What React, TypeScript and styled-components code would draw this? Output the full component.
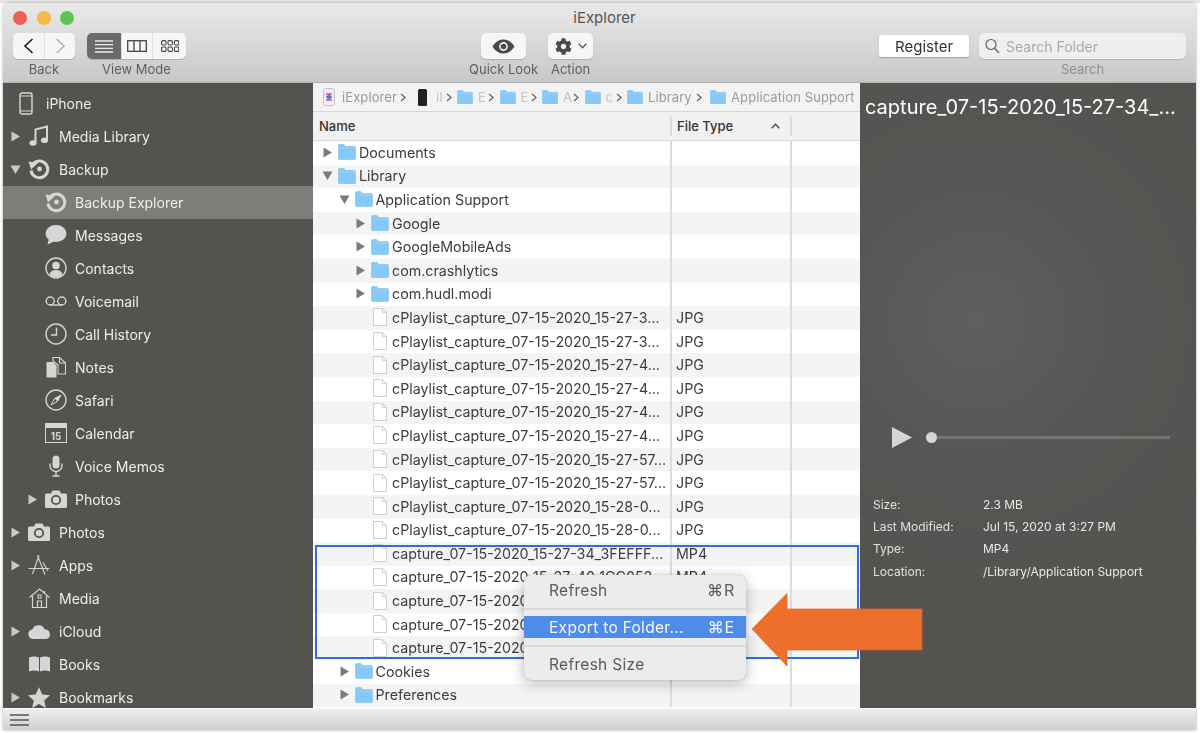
import React from 'react'
import styled, { createGlobalStyle } from 'styled-components'
import { FaCog } from 'react-icons/fa'

const GlobalStyle = createGlobalStyle`
    html, body {
        margin: 0;
        padding: 0;
        background: #fff;
        overflow: hidden;
    }
    * {
        box-sizing: border-box;
    }
    #root {
        font-family: Inter, "Liberation Sans", sans-serif;
    }
`

const SIDE_ICON_COLOR = '#d6d6d4'

const SideIcon = ({ name }: { name: string }) => {
    const c = SIDE_ICON_COLOR
    const line = { fill: 'none', stroke: c, strokeWidth: 1.4 }
    switch (name) {
        case 'phone':
            return (
                <svg width="14" height="23" viewBox="0 0 14 23">
                    <rect x="1" y="1" width="12" height="21" rx="2" {...line} />
                    <path d="M1 4h12M1 19h12" {...line} strokeWidth={1} />
                </svg>
            )
        case 'music':
            return (
                <svg width="22" height="22" viewBox="0 0 22 22">
                    <path d="M7.5 17V4.5L19 1.5V14" {...line} strokeWidth={2} />
                    <ellipse cx="5" cy="18" rx="3.6" ry="2.8" fill={c} />
                    <ellipse cx="16.5" cy="15.2" rx="3.6" ry="2.8" fill={c} />
                </svg>
            )
        case 'backup':
            return (
                <svg width="22" height="22" viewBox="0 0 22 22">
                    <path d="M5.4 5.4A8.4 8.4 0 1 1 3 12.5" {...line} strokeWidth={3} />
                    <path d="M0.5 3.5L10 5L3 11.5z" fill={c} />
                    <circle cx="11.5" cy="11" r="2.4" fill={c} />
                </svg>
            )
        case 'message':
            return (
                <svg width="22" height="22" viewBox="0 0 22 22">
                    <ellipse cx="11" cy="9.5" rx="10.5" ry="8.5" fill={c} />
                    <path d="M4 14.5L2.5 20.5L10 17z" fill={c} />
                </svg>
            )
        case 'contact':
            return (
                <svg width="22" height="22" viewBox="0 0 22 22">
                    <circle cx="11" cy="11" r="10" {...line} />
                    <circle cx="11" cy="8.5" r="3.8" fill={c} />
                    <path d="M4.5 17.5c1-3.5 3.5-4.5 6.5-4.5s5.5 1 6.5 4.5A9.5 9.5 0 0 1 11 20.5a9.5 9.5 0 0 1-6.5-3z" fill={c} />
                </svg>
            )
        case 'voicemail':
            return (
                <svg width="22" height="22" viewBox="0 0 22 22">
                    <circle cx="5.2" cy="11" r="4" {...line} />
                    <circle cx="16.8" cy="11" r="4" {...line} />
                    <path d="M5.2 15h11.6" {...line} />
                </svg>
            )
        case 'clock':
            return (
                <svg width="22" height="22" viewBox="0 0 22 22">
                    <circle cx="11" cy="11" r="10" {...line} />
                    <path d="M11.5 4.5V12H6" {...line} />
                </svg>
            )
        case 'notes':
            return (
                <svg width="20" height="21" viewBox="0 0 20 21">
                    <path d="M0.5 5H7L10.5 8.5V20.5H0.5z" fill={c} />
                    <path d="M7 4V0.5H13.5L19.5 6V17H12V8L7 4z" {...line} strokeWidth={1.1} />
                    <path d="M13.5 0.5V6H19.5" {...line} strokeWidth={1.1} />
                </svg>
            )
        case 'safari':
            return (
                <svg width="22" height="22" viewBox="0 0 22 22">
                    <circle cx="11" cy="11" r="10" {...line} />
                    <path d="M16 6L12.5 12.5L6 16L9.5 9.5z" {...line} strokeWidth={1} />
                    <path d="M16 6L9.5 9.5L12.5 12.5z" fill={c} />
                </svg>
            )
        case 'calendar':
            return (
                <svg width="22" height="20" viewBox="0 0 22 20">
                    <rect x="0.5" y="0.5" width="21" height="19" {...line} strokeWidth={1} />
                    <rect x="0.5" y="0.5" width="21" height="4.5" fill={c} />
                    <text x="11" y="16.5" textAnchor="middle" fontSize="10" fontWeight="700" fontFamily="Inter, sans-serif" fill={c}>15</text>
                </svg>
            )
        case 'mic':
            return (
                <svg width="14" height="22" viewBox="0 0 14 22">
                    <rect x="3.5" y="0.5" width="7" height="13" rx="3.5" fill={c} />
                    <path d="M1 8.5v2a6 6 0 0 0 12 0v-2M7 16.5V21M3.5 21h7" {...line} />
                </svg>
            )
        case 'camera':
            return (
                <svg width="22" height="18" viewBox="0 0 22 18">
                    <path d="M1.5 3.5H6L7.5 0.5H14.5L16 3.5H20.5A1.5 1.5 0 0 1 22 5V16.5A1.5 1.5 0 0 1 20.5 18H1.5A1.5 1.5 0 0 1 0 16.5V5A1.5 1.5 0 0 1 1.5 3.5z" fill={c} />
                    <circle cx="11" cy="10" r="4.2" fill="none" stroke="#555350" strokeWidth={1.8} />
                </svg>
            )
        case 'apps':
            return (
                <svg width="22" height="20" viewBox="0 0 22 20">
                    <path d="M11 0.5L4.5 19M9.5 0.5L17 19.5M0.5 13.5H21.5M15 7.5L20 16" {...line} strokeWidth={1.1} />
                </svg>
            )
        case 'home':
            return (
                <svg width="21" height="20" viewBox="0 0 21 20">
                    <path d="M0.5 9.5L10.5 1L20.5 9.5M3.5 8V19.5H17.5V8M15.5 3V6M8.5 19.5V13H12.5V19.5" {...line} strokeWidth={1.2} />
                    <rect x="9" y="7" width="3" height="3" {...line} strokeWidth={1} />
                </svg>
            )
        case 'cloud':
            return (
                <svg width="22" height="15" viewBox="0 0 22 15">
                    <path d="M5 15A4.8 4.8 0 0 1 4.2 5.5A6.8 6.8 0 0 1 16.8 5.5A4.8 4.8 0 0 1 18 15z" fill={c} />
                </svg>
            )
        case 'book':
            return (
                <svg width="21" height="16" viewBox="0 0 21 16">
                    <path d="M0 1.5C3 0 7 0 10 1.5V15.5C7 14 3 14 0 15.5z" fill={c} />
                    <path d="M11 1.5C14 0 18 0 21 1.5V15.5C18 14 14 14 11 15.5z" fill={c} />
                </svg>
            )
        case 'star':
            return (
                <svg width="22" height="21" viewBox="0 0 22 21">
                    <path d="M11 0L14.2 7.5L22 8.2L16.2 13.4L17.9 21L11 17L4.1 21L5.8 13.4L0 8.2L7.8 7.5z" fill={c} />
                </svg>
            )
        default:
            return null
    }
}

const Triangle = ({ open, color }: { open?: boolean; color: string }) => (
    <svg width="11" height="11" viewBox="0 0 11 11">
        {open ? <path d="M0.5 1.5H10.5L5.5 10z" fill={color} /> : <path d="M1.5 0.5L10 5.5L1.5 10.5z" fill={color} />}
    </svg>
)

const Folder = ({ size = 18 }: { size?: number }) => (
    <svg width={size} height={(size * 16) / 18} viewBox="0 0 18 16">
        <path d="M0.5 1.5A1 1 0 0 1 1.5 0.5H6L7.5 2.5H16.5A1 1 0 0 1 17.5 3.5V14.5A1 1 0 0 1 16.5 15.5H1.5A1 1 0 0 1 0.5 14.5z" fill="#86c8f6" stroke="#6fb6ea" strokeWidth={0.5} />
        <path d="M0.5 4H17.5" stroke="#a3d8fa" strokeWidth={0.8} />
    </svg>
)

const FileGlyph = () => (
    <svg width="14" height="18" viewBox="0 0 14 18">
        <path d="M0.5 0.5H9.5L13.5 4.5V17.5H0.5z" fill="#fff" stroke="#cfcfcf" />
        <path d="M9.5 0.5V4.5H13.5" fill="none" stroke="#cfcfcf" />
    </svg>
)

const CrumbChevron = () => (
    <svg width="6" height="9" viewBox="0 0 6 9">
        <path d="M1 1L5 4.5L1 8" fill="none" stroke="#666" strokeWidth={1.3} />
    </svg>
)

const Page = styled.div`
    width: 1200px;
    height: 733px;
    overflow: hidden;
    filter: blur(0.55px);
`

const BackdropStrip = styled.div`
    height: 3px;
    background: #e6e6e6;
`

const Window = styled.div`
    position: relative;
    width: 1193px;
    height: 727px;
    margin-left: 3px;
    display: flex;
    flex-direction: column;
    border-radius: 5px 5px 0 0;
    overflow: hidden;
    box-shadow: 0 0 3px rgba(0, 0, 0, 0.35);
`

const Toolbar = styled.header`
    height: 80px;
    flex-shrink: 0;
    background: linear-gradient(#e9e9e9, #c8c8c8);
    border-bottom: 1px solid #b0b0b0;
`

const TitleRow = styled.div`
    height: 30px;
    display: grid;
    grid-template-columns: 1fr auto 1fr;
    align-items: center;
    padding: 0 0 1px 10px;
`

const Lights = styled.div`
    display: flex;
    gap: 9.5px;
`

const Light = styled.span<{ $color: string }>`
    width: 14px;
    height: 14px;
    border-radius: 50%;
    background: ${(p) => p.$color};
`

const Title = styled.div`
    font-size: 15px;
    color: #555;
`

const ToolRow = styled.div`
    display: flex;
    align-items: flex-start;
    padding-left: 10px;
`

const ToolGroup = styled.div<{ $left?: number }>`
    display: flex;
    flex-direction: column;
    align-items: center;
    margin-left: ${(p) => p.$left ?? 0}px;
`

const ToolLabel = styled.div<{ $muted?: boolean }>`
    font-size: 13px;
    line-height: 16px;
    margin-top: 2px;
    color: ${(p) => (p.$muted ? '#8f8f8f' : '#5f5f5f')};
    white-space: nowrap;
`

const Segments = styled.div`
    display: flex;
    height: 26px;
    border-radius: 5px;
    overflow: hidden;
    background: #f6f6f6;
    box-shadow: 0 1px 1px rgba(0, 0, 0, 0.18);
`

const Segment = styled.div<{ $width: number; $active?: boolean }>`
    width: ${(p) => p.$width}px;
    display: flex;
    align-items: center;
    justify-content: center;
    background: ${(p) => (p.$active ? '#6a6a6a' : 'transparent')};
    & + & {
        border-left: 1px solid #dedede;
    }
`

const ToolButton = styled.div<{ $width: number }>`
    width: ${(p) => p.$width}px;
    height: 26px;
    display: flex;
    align-items: center;
    justify-content: center;
    gap: 6px;
    border-radius: 5px;
    background: #f6f6f6;
    box-shadow: 0 1px 1px rgba(0, 0, 0, 0.18);
`

const RegisterButton = styled.div`
    width: 90px;
    height: 22px;
    margin: 2px 10px 0 286px;
    display: flex;
    align-items: center;
    justify-content: center;
    font-size: 15px;
    color: #333;
    background: #fff;
    border-radius: 3px;
    box-shadow: 0 1px 1px rgba(0, 0, 0, 0.25);
`

const SearchBox = styled.div`
    width: 207px;
    height: 26px;
    display: flex;
    align-items: center;
    gap: 6px;
    padding-left: 6px;
    font-size: 14px;
    color: #a9a9a9;
    background: #efefef;
    border-radius: 5px;
    box-shadow: 0 1px 1px rgba(0, 0, 0, 0.15);
`

const Body = styled.div`
    flex: 1;
    min-height: 0;
    display: flex;
`

const Sidebar = styled.nav`
    width: 310px;
    flex-shrink: 0;
    padding-top: 3.5px;
    overflow: hidden;
    background: #555350;
`

const SideRow = styled.div<{ $level: number; $active?: boolean }>`
    height: 33px;
    display: flex;
    align-items: center;
    padding-left: ${(p) => 7 + p.$level * 17}px;
    background: ${(p) => (p.$active ? '#7f7d7a' : 'transparent')};
`

const DeviceRow = styled(SideRow)`
    padding-left: 16px;
    gap: 13px;
`

const ArrowSlot = styled.span`
    width: 18px;
    flex-shrink: 0;
    display: flex;
    align-items: center;
`

const IconSlot = styled.span<{ $level: number }>`
    width: 22px;
    flex-shrink: 0;
    display: flex;
    align-items: center;
    justify-content: center;
    margin-right: ${(p) => (p.$level === 0 ? 9 : 8)}px;
`

const SideText = styled.span`
    font-size: 14px;
    color: #ededeb;
    white-space: nowrap;
`

const Center = styled.main`
    width: 547px;
    flex-shrink: 0;
    display: flex;
    flex-direction: column;
    background: #fff;
`

const Breadcrumbs = styled.div`
    height: 29px;
    flex-shrink: 0;
    display: flex;
    align-items: center;
    padding-left: 10px;
    background: #f3f3f3;
    border-bottom: 1px solid #d6d6d6;
    overflow: hidden;
`

const Crumb = styled.div`
    display: flex;
    align-items: center;
    flex-shrink: 0;
`

const CrumbIcon = styled.span<{ $gap: number }>`
    display: flex;
    margin-right: ${(p) => p.$gap}px;
`

const CrumbLabel = styled.span<{ $width?: number; $faint?: boolean }>`
    width: ${(p) => (p.$width ? `${p.$width}px` : 'auto')};
    font-size: 13px;
    letter-spacing: 0.1px;
    color: ${(p) => (p.$faint ? '#c4c4c4' : '#9a9a9a')};
    white-space: nowrap;
    overflow: hidden;
`

const CrumbSep = styled.span<{ $width: number }>`
    width: ${(p) => p.$width}px;
    display: flex;
    align-items: center;
`

const HeaderRow = styled.div`
    height: 29px;
    flex-shrink: 0;
    display: grid;
    grid-template-columns: 359px 120px 1fr;
    background: #f1f1f1;
    border-bottom: 1px solid #d9d9d9;
    font-size: 13px;
    font-weight: 500;
    color: #333;
`

const HeaderCell = styled.div<{ $divider?: boolean; $inset?: number }>`
    display: flex;
    align-items: center;
    justify-content: space-between;
    margin: 4px 0;
    padding: 0 10px 0 ${(p) => p.$inset ?? 6}px;
    border-right: ${(p) => (p.$divider ? '2px solid #dcdcdc' : 'none')};
`

const TableRows = styled.div`
    position: relative;
    flex: 1;
    min-height: 0;
    display: grid;
    grid-auto-rows: 23.6px;
    overflow: hidden;
`

const TableRow = styled.div`
    display: grid;
    grid-template-columns: 359px 120px 1fr;
    font-size: 14.25px;
    color: #3c3c3c;
    &:nth-child(even) {
        background: #f4f4f5;
    }
`

const NameCell = styled.div<{ $level: number }>`
    display: flex;
    align-items: center;
    padding: 0 0 1px ${(p) => 9 + p.$level * 16.5}px;
    border-right: 2px solid #dcdcdc;
    white-space: nowrap;
    overflow: hidden;
`

const RowArrow = styled.span`
    width: 16px;
    flex-shrink: 0;
    display: flex;
    align-items: center;
`

const RowIcon = styled.span`
    width: 21px;
    flex-shrink: 0;
    display: flex;
    align-items: center;
`

const FileIconSlot = styled(RowIcon)`
    padding-left: 18px;
    width: 37px;
`

const TypeCell = styled.div`
    display: flex;
    align-items: center;
    padding: 0 0 1px 4px;
    border-right: 2px solid #dcdcdc;
`

const Preview = styled.aside`
    flex: 1;
    display: flex;
    flex-direction: column;
    padding: 10px 0 0 5px;
    background: radial-gradient(circle at 35% 38%, #5e5f60 0%, #565553 35%, #555350 70%);
    color: #e4e4e2;
`

const PreviewTitle = styled.h2`
    margin: 0;
    font-size: 20px;
    font-weight: 400;
    line-height: 28px;
    color: #fff;
    white-space: nowrap;
`

const Player = styled.div`
    display: flex;
    align-items: center;
    margin: 306px 0 0 27px;
`

const PlayGlyph = styled.span`
    display: flex;
    margin-right: 14px;
`

const Thumb = styled.span`
    width: 11px;
    height: 11px;
    border-radius: 50%;
    flex-shrink: 0;
    background: #d6d6d4;
`

const Track = styled.span`
    width: 233px;
    height: 3px;
    background: #767573;
`

const MetaGrid = styled.dl`
    display: grid;
    grid-template-columns: 110px 1fr;
    grid-auto-rows: 22.4px;
    align-items: center;
    margin: 45px 0 0 8px;
    font-size: 12px;
`

const MetaTerm = styled.dt`
    margin: 0;
    color: #e0e0de;
`

const MetaValue = styled.dd`
    margin: 0;
    color: #e8e8e6;
`

const BottomBar = styled.footer`
    height: 22px;
    flex-shrink: 0;
    display: flex;
    align-items: center;
    padding-left: 7px;
    background: linear-gradient(#eeeeee, #cfcfcf);
    border-top: 1px solid #fafafa;
`

const Selection = styled.div`
    position: absolute;
    left: 312px;
    top: 541.5px;
    width: 544px;
    height: 114.5px;
    border: 2px solid #2f6fdc;
    pointer-events: none;
`

const ContextMenu = styled.div`
    position: absolute;
    left: 521px;
    top: 572px;
    width: 222px;
    height: 105px;
    padding-top: 4px;
    border-radius: 7px;
    background: #ececec;
    box-shadow: 0 3px 14px rgba(0, 0, 0, 0.28), 0 0 1px rgba(0, 0, 0, 0.4);
    font-size: 15.5px;
    letter-spacing: 0.3px;
    color: #5a5a5a;
`

const MenuItem = styled.div<{ $active?: boolean }>`
    height: 22px;
    display: flex;
    align-items: center;
    justify-content: space-between;
    padding: 0 11px 0 25px;
    background: ${(p) => (p.$active ? '#4f8be9' : 'transparent')};
    color: ${(p) => (p.$active ? '#f4f8ff' : 'inherit')};
`

const MenuDivider = styled.div`
    height: 2px;
    margin: 7px 0 6px;
    background: #dadada;
`

const Shortcut = styled.span`
    font-size: 16px;
    letter-spacing: 0.8px;
`

const CalloutArrow = styled.svg`
    position: absolute;
    left: 749px;
    top: 590px;
`

const sideItems = [
    { label: 'Media Library', icon: 'music', level: 0, arrow: 'right' },
    { label: 'Backup', icon: 'backup', level: 0, arrow: 'down' },
    { label: 'Backup Explorer', icon: 'backup', level: 1, active: true },
    { label: 'Messages', icon: 'message', level: 1 },
    { label: 'Contacts', icon: 'contact', level: 1 },
    { label: 'Voicemail', icon: 'voicemail', level: 1 },
    { label: 'Call History', icon: 'clock', level: 1 },
    { label: 'Notes', icon: 'notes', level: 1 },
    { label: 'Safari', icon: 'safari', level: 1 },
    { label: 'Calendar', icon: 'calendar', level: 1 },
    { label: 'Voice Memos', icon: 'mic', level: 1 },
    { label: 'Photos', icon: 'camera', level: 1, arrow: 'right' },
    { label: 'Photos', icon: 'camera', level: 0, arrow: 'right' },
    { label: 'Apps', icon: 'apps', level: 0, arrow: 'right' },
    { label: 'Media', icon: 'home', level: 0 },
    { label: 'iCloud', icon: 'cloud', level: 0, arrow: 'right' },
    { label: 'Books', icon: 'book', level: 0 },
    { label: 'Bookmarks', icon: 'star', level: 0, arrow: 'right' },
]

type Row = { name: string; level: number; kind: 'closed' | 'open' | 'file'; type?: string }

const rows: Row[] = [
    { name: 'Documents', level: 0, kind: 'closed' },
    { name: 'Library', level: 0, kind: 'open' },
    { name: 'Application Support', level: 1, kind: 'open' },
    { name: 'Google', level: 2, kind: 'closed' },
    { name: 'GoogleMobileAds', level: 2, kind: 'closed' },
    { name: 'com.crashlytics', level: 2, kind: 'closed' },
    { name: 'com.hudl.modi', level: 2, kind: 'closed' },
    { name: 'cPlaylist_capture_07-15-2020_15-27-3...', level: 2, kind: 'file', type: 'JPG' },
    { name: 'cPlaylist_capture_07-15-2020_15-27-3...', level: 2, kind: 'file', type: 'JPG' },
    { name: 'cPlaylist_capture_07-15-2020_15-27-4...', level: 2, kind: 'file', type: 'JPG' },
    { name: 'cPlaylist_capture_07-15-2020_15-27-4...', level: 2, kind: 'file', type: 'JPG' },
    { name: 'cPlaylist_capture_07-15-2020_15-27-4...', level: 2, kind: 'file', type: 'JPG' },
    { name: 'cPlaylist_capture_07-15-2020_15-27-4...', level: 2, kind: 'file', type: 'JPG' },
    { name: 'cPlaylist_capture_07-15-2020_15-27-57...', level: 2, kind: 'file', type: 'JPG' },
    { name: 'cPlaylist_capture_07-15-2020_15-27-57...', level: 2, kind: 'file', type: 'JPG' },
    { name: 'cPlaylist_capture_07-15-2020_15-28-0...', level: 2, kind: 'file', type: 'JPG' },
    { name: 'cPlaylist_capture_07-15-2020_15-28-0...', level: 2, kind: 'file', type: 'JPG' },
    { name: 'capture_07-15-2020_15-27-34_3FEFFF...', level: 2, kind: 'file', type: 'MP4' },
    { name: 'capture_07-15-2020_15-27-40_1CC052...', level: 2, kind: 'file', type: 'MP4' },
    { name: 'capture_07-15-2020_15-27-46_2AB1C7...', level: 2, kind: 'file', type: 'MP4' },
    { name: 'capture_07-15-2020_15-27-52_7DE0A4...', level: 2, kind: 'file', type: 'MP4' },
    { name: 'capture_07-15-2020_15-27-58_9F3B16...', level: 2, kind: 'file', type: 'MP4' },
    { name: 'Cookies', level: 1, kind: 'closed' },
    { name: 'Preferences', level: 1, kind: 'closed' },
]

const meta = [
    ['Size:', '2.3 MB'],
    ['Last Modified:', 'Jul 15, 2020 at 3:27 PM'],
    ['Type:', 'MP4'],
    ['Location:', '/Library/Application Support'],
]

const crumbFolders = [
    { label: 'E', width: 10, sep: 11.5, faint: true },
    { label: 'E', width: 10, sep: 11.5, faint: true },
    { label: 'A', width: 10, sep: 11.5, faint: true },
    { label: 'c', width: 10, sep: 11.5, faint: true },
    { label: 'Library', width: 48, sep: 14, faint: false },
]

const App = () => (
    <Page>
        <GlobalStyle />
        <BackdropStrip />
        <Window>
            <Toolbar>
                <TitleRow>
                    <Lights>
                        <Light $color="#ee5f55" />
                        <Light $color="#f5b945" />
                        <Light $color="#5fc552" />
                    </Lights>
                    <Title>iExplorer</Title>
                </TitleRow>
                <ToolRow>
                    <ToolGroup>
                        <Segments>
                            <Segment $width={31}>
                                <svg width="11" height="16" viewBox="0 0 11 16">
                                    <path d="M9.5 1L2 8L9.5 15" fill="none" stroke="#222" strokeWidth={1.7} />
                                </svg>
                            </Segment>
                            <Segment $width={31}>
                                <svg width="11" height="16" viewBox="0 0 11 16">
                                    <path d="M1.5 1L9 8L1.5 15" fill="none" stroke="#b5b5b5" strokeWidth={1.7} />
                                </svg>
                            </Segment>
                        </Segments>
                        <ToolLabel>Back</ToolLabel>
                    </ToolGroup>
                    <ToolGroup $left={12}>
                        <Segments>
                            <Segment $width={34} $active>
                                <svg width="18" height="13" viewBox="0 0 18 13">
                                    <path d="M0 1h18M0 4.7h18M0 8.3h18M0 12h18" stroke="#e9e9e9" strokeWidth={1.3} />
                                </svg>
                            </Segment>
                            <Segment $width={31}>
                                <svg width="20" height="12" viewBox="0 0 20 12">
                                    <rect x="0.7" y="0.7" width="18.6" height="10.6" fill="none" stroke="#444" strokeWidth={1.3} />
                                    <path d="M7 1v10M13 1v10" stroke="#444" strokeWidth={1.3} />
                                </svg>
                            </Segment>
                            <Segment $width={34}>
                                <svg width="18" height="12" viewBox="0 0 18 12">
                                    {[0, 1].map((y) =>
                                        [0, 1, 2].map((x) => (
                                            <rect key={`${x}${y}`} x={0.6 + x * 6.4} y={0.6 + y * 6.4} width={4.4} height={4.4} rx={1.2} fill="none" stroke="#444" strokeWidth={1.1} />
                                        ))
                                    )}
                                </svg>
                            </Segment>
                        </Segments>
                        <ToolLabel>View Mode</ToolLabel>
                    </ToolGroup>
                    <ToolGroup $left={283}>
                        <ToolButton $width={45}>
                            <svg width="23" height="15" viewBox="0 0 23 15">
                                <path d="M0.5 7.5C4 2 8 0.5 11.5 0.5S19 2 22.5 7.5C19 13 15 14.5 11.5 14.5S4 13 0.5 7.5z" fill="#4a4a4a" />
                                <circle cx="11.5" cy="7.5" r="4.4" fill="#f6f6f6" />
                                <circle cx="11.5" cy="7.5" r="2.8" fill="#4a4a4a" />
                            </svg>
                        </ToolButton>
                        <ToolLabel>Quick Look</ToolLabel>
                    </ToolGroup>
                    <ToolGroup $left={10}>
                        <ToolButton $width={45}>
                            <FaCog size={17} color="#4a4a4a" />
                            <svg width="9" height="6" viewBox="0 0 9 6">
                                <path d="M0.7 0.7L4.5 4.7L8.3 0.7" fill="none" stroke="#555" strokeWidth={1.3} />
                            </svg>
                        </ToolButton>
                        <ToolLabel>Action</ToolLabel>
                    </ToolGroup>
                    <RegisterButton>Register</RegisterButton>
                    <ToolGroup>
                        <SearchBox>
                            <svg width="15" height="16" viewBox="0 0 15 16">
                                <circle cx="6" cy="6.5" r="5" fill="none" stroke="#666" strokeWidth={1.2} />
                                <path d="M9.7 10.2L14 15" stroke="#666" strokeWidth={1.4} />
                            </svg>
                            Search Folder
                        </SearchBox>
                        <ToolLabel $muted>Search</ToolLabel>
                    </ToolGroup>
                </ToolRow>
            </Toolbar>

            <Body>
                <Sidebar>
                    <DeviceRow $level={0}>
                        <SideIcon name="phone" />
                        <SideText>iPhone</SideText>
                    </DeviceRow>
                    {sideItems.map((item, i) => (
                        <SideRow key={i} $level={item.level} $active={item.active}>
                            <ArrowSlot>
                                {item.arrow && <Triangle open={item.arrow === 'down'} color="#c9c9c7" />}
                            </ArrowSlot>
                            <IconSlot $level={item.level}>
                                <SideIcon name={item.icon} />
                            </IconSlot>
                            <SideText>{item.label}</SideText>
                        </SideRow>
                    ))}
                </Sidebar>

                <Center>
                    <Breadcrumbs>
                        <Crumb>
                            <CrumbIcon $gap={7}>
                                <svg width="12" height="18" viewBox="0 0 12 18">
                                    <rect x="0.5" y="0.5" width="11" height="17" rx="2" fill="#f4eef4" stroke="#c9bfd0" />
                                    <path d="M3 6h6M3 9h6M3 12h6" stroke="#c0508a" strokeWidth={1.3} />
                                    <circle cx="6" cy="9" r="2.2" fill="#5a78c8" />
                                </svg>
                            </CrumbIcon>
                            <CrumbLabel $width={58}>iExplorer</CrumbLabel>
                            <CrumbSep $width={18}>
                                <CrumbChevron />
                            </CrumbSep>
                        </Crumb>
                        <Crumb>
                            <CrumbIcon $gap={9}>
                                <svg width="9" height="17" viewBox="0 0 9 17">
                                    <rect width="9" height="17" rx="1.5" fill="#222" />
                                </svg>
                            </CrumbIcon>
                            <CrumbLabel $width={10} $faint>iI</CrumbLabel>
                            <CrumbSep $width={11}>
                                <CrumbChevron />
                            </CrumbSep>
                        </Crumb>
                        {crumbFolders.map((c, i) => (
                            <Crumb key={i}>
                                <CrumbIcon $gap={5}>
                                    <Folder size={16} />
                                </CrumbIcon>
                                <CrumbLabel $width={c.width} $faint={c.faint}>{c.label}</CrumbLabel>
                                <CrumbSep $width={c.sep}>
                                    <CrumbChevron />
                                </CrumbSep>
                            </Crumb>
                        ))}
                        <Crumb>
                            <CrumbIcon $gap={5}>
                                <Folder size={16} />
                            </CrumbIcon>
                            <CrumbLabel>Application Support</CrumbLabel>
                        </Crumb>
                    </Breadcrumbs>
                    <HeaderRow>
                        <HeaderCell $divider>Name</HeaderCell>
                        <HeaderCell $divider $inset={5}>
                            File Type
                            <svg width="9" height="6" viewBox="0 0 9 6">
                                <path d="M0.7 5.3L4.5 1.3L8.3 5.3" fill="none" stroke="#444" strokeWidth={1.3} />
                            </svg>
                        </HeaderCell>
                        <HeaderCell />
                    </HeaderRow>
                    <TableRows>
                        {rows.map((row, i) => (
                            <TableRow key={i}>
                                <NameCell $level={row.level}>
                                    {row.kind === 'file' ? (
                                        <FileIconSlot>
                                            <FileGlyph />
                                        </FileIconSlot>
                                    ) : (
                                        <>
                                            <RowArrow>
                                                <Triangle open={row.kind === 'open'} color="#7a7a7a" />
                                            </RowArrow>
                                            <RowIcon>
                                                <Folder />
                                            </RowIcon>
                                        </>
                                    )}
                                    {row.name}
                                </NameCell>
                                <TypeCell>{row.type}</TypeCell>
                                <div />
                            </TableRow>
                        ))}
                    </TableRows>
                </Center>

                <Preview>
                    <PreviewTitle>capture_07-15-2020_15-27-34_...</PreviewTitle>
                    <Player>
                        <PlayGlyph>
                            <svg width="20" height="21" viewBox="0 0 20 21">
                                <path d="M0 0L20 10.5L0 21z" fill="#d6d6d4" />
                            </svg>
                        </PlayGlyph>
                        <Thumb />
                        <Track />
                    </Player>
                    <MetaGrid>
                        {meta.map(([term, value]) => (
                            <React.Fragment key={term}>
                                <MetaTerm>{term}</MetaTerm>
                                <MetaValue>{value}</MetaValue>
                            </React.Fragment>
                        ))}
                    </MetaGrid>
                </Preview>
            </Body>

            <BottomBar>
                <svg width="19" height="12" viewBox="0 0 19 12">
                    <path d="M0 1h19M0 6h19M0 11h19" stroke="#555" strokeWidth={1.3} />
                </svg>
            </BottomBar>

            <Selection />
            <ContextMenu>
                <MenuItem>
                    Refresh
                    <Shortcut>⌘R</Shortcut>
                </MenuItem>
                <MenuDivider />
                <MenuItem $active>
                    Export to Folder...
                    <Shortcut>⌘E</Shortcut>
                </MenuItem>
                <MenuDivider />
                <MenuItem>Refresh Size</MenuItem>
            </ContextMenu>
            <CalloutArrow width="174" height="74" viewBox="0 0 174 74">
                <path d="M0 36L35 0.5V16H170V57H35V73z" fill="#ee6f2c" stroke="#d9642a" strokeWidth={0.7} />
            </CalloutArrow>
        </Window>
    </Page>
)

export default App
